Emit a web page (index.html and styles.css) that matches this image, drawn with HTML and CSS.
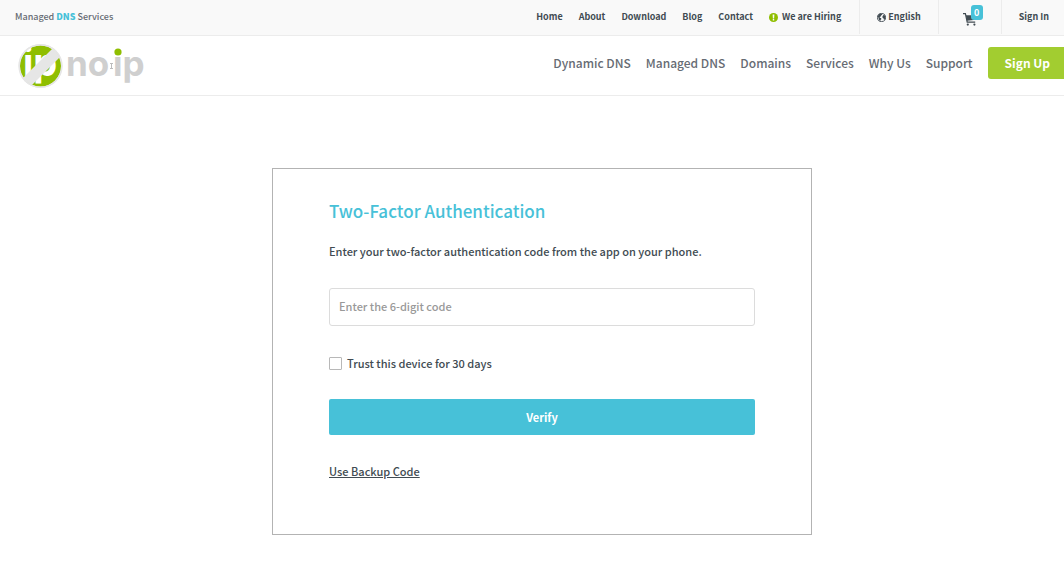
FILE: index.html
```html
<!DOCTYPE html>
<html lang="en">
<head>
<meta charset="utf-8">
<meta name="viewport" content="width=device-width, initial-scale=1">
<title>Two-Factor Authentication - No-IP</title>
<link rel="stylesheet" href="styles.css">
</head>
<body>
<div class="topbar">
  <p class="tagline">Managed <strong>DNS</strong> Services</p>
  <nav class="toplinks" aria-label="Account">
    <a href="#">Home</a>
    <a href="#">About</a>
    <a href="#">Download</a>
    <a href="#">Blog</a>
    <a href="#">Contact</a>
    <a href="#" class="hiring"><svg width="9" height="9" viewBox="0 0 10 10" aria-hidden="true"><circle cx="5" cy="5" r="5" fill="#8fbe00"/><path d="M4 1.6h2L5.7 6H4.3zM4.2 6.8h1.6v1.5H4.2z" fill="#f9f9f9"/></svg>We are Hiring</a>
    <a href="#" class="cell language"><svg width="9" height="9" viewBox="0 0 12 12" aria-hidden="true"><circle cx="6" cy="6" r="5.4" fill="#f9f9f9" stroke="#414b52" stroke-width="1.2"/><path d="M1 4 3 1.4 6 .8 7 2.2 5.4 3.2 5 4.6 3.4 5.2 4 6.4 5.6 7 5.8 8.4 4.6 9.4 4.4 11 2.6 9.4 2.2 7.2zM8 3.4 9.6 2 11.2 5 11 8 9.4 9.4 8.8 7.2 7.4 6.4 7.2 4.6z" fill="#414b52"/></svg>English</a>
    <a href="#" class="cell cart" aria-label="Cart, 0 items"><svg width="14" height="13" viewBox="0 0 14 13" aria-hidden="true"><path d="M0 .6h2.4L4.2 9.2h8" fill="none" stroke="#414b52" stroke-width="1.2"/><path d="M2.8 2.2H13v4.6L4 7.8z" fill="#414b52"/><circle cx="4.8" cy="11.6" r="1.1" fill="#414b52"/><circle cx="11.4" cy="11.6" r="1.1" fill="#414b52"/></svg><span class="count">0</span></a>
    <a href="#" class="cell signin">Sign In</a>
  </nav>
</div>
<header class="header">
  <a href="#" class="logo" aria-label="no-ip">
    <svg width="130" height="58" viewBox="0 -6 130 58" aria-hidden="true">
      <defs><clipPath id="disc"><circle cx="22.5" cy="23" r="21"/></clipPath></defs>
      <circle cx="22.5" cy="23" r="22" fill="#e6e6e6"/>
      <g clip-path="url(#disc)">
        <circle cx="22.5" cy="23" r="20.5" fill="#8fbe00"/>
        <text x="5" y="33" class="badge-text">ip</text>
        <path d="M1 39 35 5 43 13 9 47z" fill="#e6e6e6"/>
      </g>
      <circle cx="22.5" cy="23" r="21.3" fill="none" stroke="#e6e6e6" stroke-width="1.5"/>
      <text x="48" y="33" class="word-text">no</text>
      <path d="M92 20h3v1h-1v4h1v1h-3v-1h1v-4h-1z" fill="#bbb"/>
      <text x="95" y="33" class="word-text">ip</text>
      <circle cx="100" cy="9" r="3.6" fill="#8fbe00"/>
    </svg>
  </a>
  <nav class="mainnav" aria-label="Main">
    <a href="#">Dynamic DNS</a>
    <a href="#">Managed DNS</a>
    <a href="#">Domains</a>
    <a href="#">Services</a>
    <a href="#">Why Us</a>
    <a href="#">Support</a>
    <a href="#" class="signup">Sign Up</a>
  </nav>
</header>
<main class="main">
  <form class="card">
    <h1>Two-Factor Authentication</h1>
    <label class="intro" for="code">Enter your two-factor authentication code from the app on your phone.</label>
    <input class="code" id="code" type="text" inputmode="numeric" placeholder="Enter the 6-digit code">
    <div class="trust">
      <input type="checkbox" id="trust">
      <label for="trust">Trust this device for 30 days</label>
    </div>
    <button class="verify" type="button">Verify</button>
    <a href="#" class="backup">Use Backup Code</a>
  </form>
</main>
</body>
</html>
```

FILE: styles.css
```css
* { box-sizing: border-box; }
body {
  margin: 0;
  background: #fff;
  color: #414b52;
  font: 500 11px/18px "Noto Sans CJK SC", "Open Sans", sans-serif;
  overflow-x: hidden;
}
a { color: inherit; text-decoration: none; }

.topbar {
  display: flex;
  justify-content: space-between;
  align-items: center;
  height: 36px;
  padding-left: 15px;
  background: #f9f9f9;
  border-bottom: 1px solid #ececec;
  font-size: 9px;
}
.tagline { margin: 0; padding-bottom: 2px; color: #666b73; white-space: nowrap; }
.tagline strong { color: #47c1d8; font-weight: 900; }
.toplinks { display: flex; align-self: stretch; font-weight: 700; white-space: nowrap; }
.toplinks a { display: flex; align-items: center; height: 34px; padding: 0 8px; }
.toplinks .hiring { gap: 4px; padding-right: 18px; }
.toplinks .cell { border-left: 1px solid #ececec; padding: 0 17px; }
.toplinks .language { gap: 2px; }
.toplinks .cart { position: relative; padding: 4px 24px 0; }
.toplinks .signin { padding-right: 15px; }
.count {
  position: absolute;
  top: 5px;
  left: 32px;
  width: 12px;
  height: 15px;
  border-radius: 3px;
  background: #47c1d8;
  color: #fff;
  line-height: 15px;
  text-align: center;
}

.header {
  display: flex;
  justify-content: space-between;
  align-items: center;
  height: 60px;
  padding-left: 18px;
  border-bottom: 1px solid #ececec;
}
.logo { display: flex; }
.badge-text { font: 700 38px Inter, sans-serif; fill: #fff; }
.word-text { font: 700 35px Inter, sans-serif; fill: #cfcfcf; }
.mainnav {
  display: flex;
  align-items: center;
  gap: 15px;
  margin-bottom: 6px;
  color: #666b73;
  font-size: 12px;
  white-space: nowrap;
}
.signup {
  height: 32px;
  padding: 0 14px 0 17px;
  border-radius: 3px 0 0 3px;
  background: #a2cd30;
  color: #fff;
  font-weight: 700;
  line-height: 32px;
}

.main { padding: 72px 0 52px 20px; }
.card {
  display: flex;
  flex-direction: column;
  max-width: 540px;
  margin: 0 auto;
  padding: 30px 56px 54px;
  border: 1px solid #b3b3b3;
}
h1 { margin: 0 0 19px; color: #47c1d8; font-size: 17px; font-weight: 500; line-height: 24px; }
.intro { margin-bottom: 28px; }
.code {
  width: 100%;
  height: 38px;
  padding: 0 9px 2px;
  border: 1px solid #dcdcdc;
  border-radius: 3px;
  background: #fff;
  color: inherit;
  font: inherit;
}
.code::placeholder { color: #999; opacity: 1; }
.trust { display: flex; align-items: center; gap: 5px; margin: 28px 0 27px; }
.trust input {
  appearance: none;
  width: 13px;
  height: 13px;
  margin: 0;
  border: 1px solid #b8b8b8;
  border-radius: 1px;
  background: #fff;
}
.trust input:checked { background: #47c1d8; }
.verify {
  height: 36px;
  border: 0;
  border-radius: 2px;
  background: #47c1d8;
  color: #fff;
  font: inherit;
  font-weight: 700;
}
.backup { align-self: flex-start; margin-top: 27px; text-decoration: underline; }
```
